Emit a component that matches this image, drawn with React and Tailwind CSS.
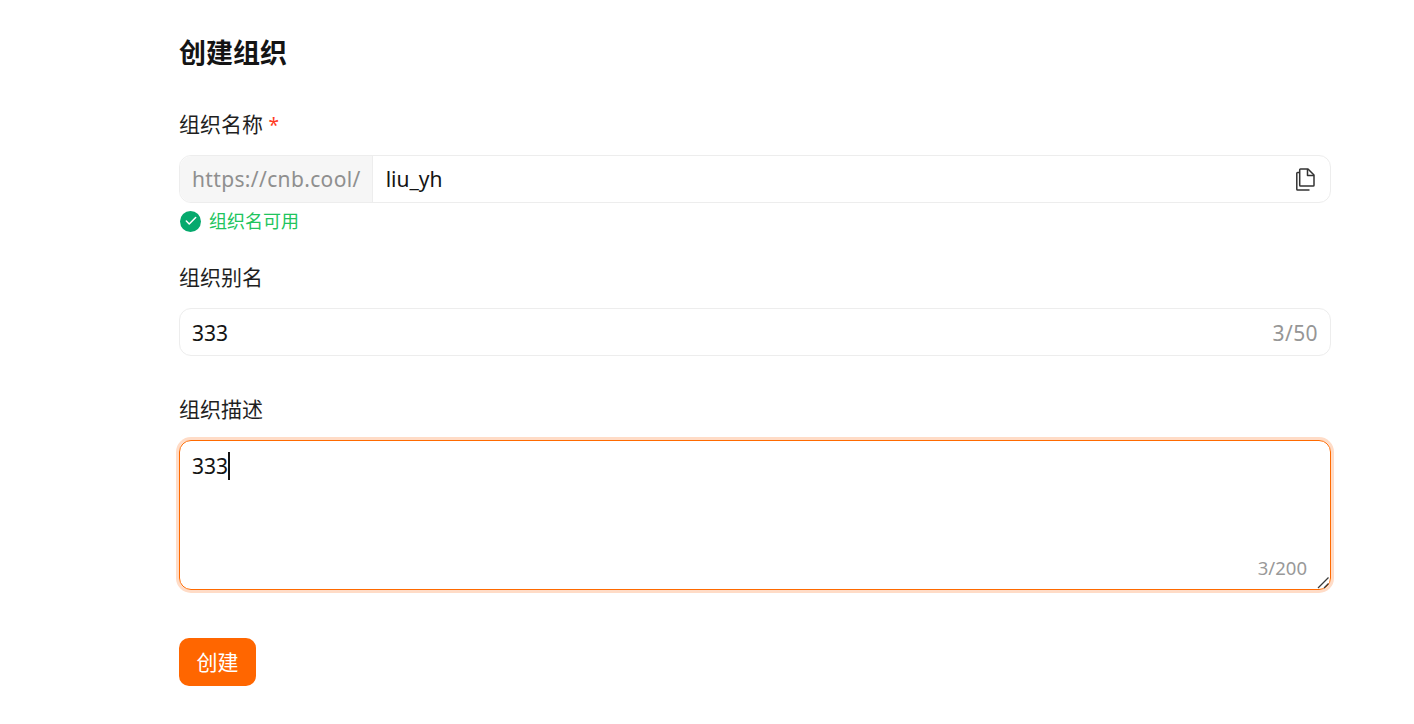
import React from 'react';
import { Check } from 'lucide-react';

const font = { fontFamily: '"Noto Sans", "Noto Sans CJK SC", sans-serif' };

const CopyIcon = () => (
  <svg width="19" height="23" viewBox="0 0 19 23" fill="none" stroke="#333333" strokeWidth="1.5" strokeLinejoin="round">
    <path d="M4.5 1h7.5l6 6v10.2a.8.8 0 0 1-.8.8H4.5a.8.8 0 0 1-.8-.8V1.8a.8.8 0 0 1 .8-.8z" />
    <path d="M11.5 1v6.5H18" />
    <path d="M3.7 4.5H1.6a.8.8 0 0 0-.8.8v15.9a.8.8 0 0 0 .8.8H13.5" />
  </svg>
);

const ResizeGrip = () => (
  <svg width="14" height="14" viewBox="0 0 14 14" fill="none" stroke="#3a3a3a" strokeWidth="1.3">
    <path d="M2 13L12.5 2.5" />
    <path d="M8 13l4.5-4.5" />
  </svg>
);

const Label = ({ children }) => (
  <div className="text-[21px] leading-[30px] text-[#1f1f1f]">{children}</div>
);

export default function App() {
  return (
    <div className="min-h-screen bg-white pl-[179px] pr-[83px] pt-[35px]" style={font}>
      <h1 className="text-[27px] leading-[36px] font-bold text-[#141414]">创建组织</h1>

      <div className="mt-[38px]">
        <div className="text-[21px] leading-[30px] text-[#1f1f1f]">
          组织名称 <span className="text-[19px] text-[#ff3b1f]">*</span>
        </div>
        <div className="mt-[15px] flex h-12 items-stretch rounded-xl border border-[#ededed]">
          <div className="flex items-center rounded-l-xl border-r border-[#ededed] bg-[#f6f6f6] pl-3 pr-[11px] pt-0.5 text-[21px] tracking-[0.35px] text-[#8f8f8f]">
            https://cnb.cool/
          </div>
          <div className="flex flex-1 items-center justify-between pl-[13px] pr-[15px] text-[21px] text-[#141414]">
            <span className="pt-0.5">liu_yh</span>
            <CopyIcon />
          </div>
        </div>
        <div className="mt-[7px] flex h-[22px] items-center gap-[8px] pl-px text-[18px] text-[#21c45d]">
          <span className="flex h-[21px] w-[21px] items-center justify-center rounded-full bg-[#05a96d]">
            <Check size={14} strokeWidth={2.6} color="#ffffff" />
          </span>
          组织名可用
        </div>
      </div>

      <div className="mt-[30px]">
        <Label>组织别名</Label>
        <div className="mt-4 flex h-12 items-center justify-between rounded-xl border border-[#ededed] px-3 pt-[3px] text-[21px]">
          <span className="text-[#141414]">333</span>
          <span className="tracking-[0.4px] text-[#969696]">3/50</span>
        </div>
      </div>

      <div className="mt-[38px]">
        <Label>组织描述</Label>
        <div className="relative mt-4 h-[150px]">
          <textarea
            readOnly
            defaultValue="333"
            className="block h-full w-full resize-none rounded-xl border border-[#ff6a00] px-3 py-2.5 text-[21px] leading-[30px] text-[#141414] shadow-[0_0_0_3px_#ffdcc7] outline-none"
          />
          <span className="absolute left-[49px] top-[12px] h-[28px] w-[2px] bg-[#141414]" />
          <span className="absolute bottom-[10px] right-[24px] text-[18.5px] leading-[24px] text-[#999999]">3/200</span>
          <span className="absolute bottom-[1px] right-[1px] flex"><ResizeGrip /></span>
        </div>
      </div>

      <button className="mt-12 h-12 w-[77px] rounded-[10px] bg-[#ff6600] pt-0.5 text-[21px] text-white">创建</button>
    </div>
  );
}
